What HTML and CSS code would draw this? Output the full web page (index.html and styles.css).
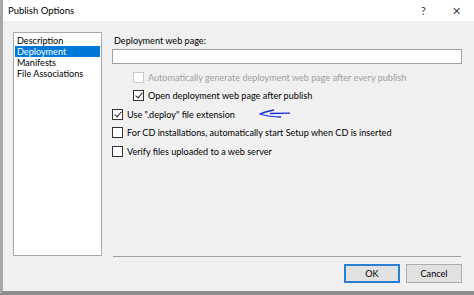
FILE: index.html
```html
<!DOCTYPE html>
<html>
<head>
<meta charset="utf-8">
<link rel="stylesheet" href="styles.css">
</head>
<body>
<div class="window">
  <div class="titlebar">
    <span class="title">Publish Options</span>
    <span class="help">?</span>
    <span class="close">✕</span>
  </div>
  <div class="body">
    <ul class="list">
      <li>Description</li>
      <li class="selected">Deployment</li>
      <li>Manifests</li>
      <li>File Associations</li>
    </ul>
    <div class="panel">
      <div class="label">Deployment web page:</div>
      <div class="input"></div>
      <div class="check sub disabled first"><span class="box"></span>Automatically generate deployment web page after every publish</div>
      <div class="check sub"><span class="box checked"></span>Open deployment web page after publish</div>
      <div class="check"><span class="box checked"></span>Use ".deploy" file extension
        <svg class="arrow" width="32" height="10" viewBox="0 0 32 10"><path d="M15 1 C10 2 5 3 1 5 C7 7 14 8 22 8" fill="none" stroke="#1a2fd8" stroke-width="1.3"/><path d="M11 4.5 L31 4.2" fill="none" stroke="#1a2fd8" stroke-width="1.3"/></svg>
      </div>
      <div class="check"><span class="box"></span>For CD installations, automatically start Setup when CD is inserted</div>
      <div class="check"><span class="box"></span>Verify files uploaded to a web server</div>
      <div class="spacer"></div>
      <div class="separator"></div>
      <div class="buttons">
        <div class="btn default">OK</div>
        <div class="btn">Cancel</div>
      </div>
    </div>
  </div>
</div>
</body>
</html>
```
FILE: styles.css
```css
* { box-sizing: border-box; }
html, body { margin: 0; padding: 0; }
body {
  width: 474px;
  height: 295px;
  overflow: hidden;
  font-family: "Lato", "Noto Sans", sans-serif;
  font-size: 9.1px;
  color: #000;
  background: #f0f0f0;
}
.window {
  width: 474px;
  height: 295px;
  display: flex;
  flex-direction: column;
  border-left: 3px solid #a8a8a8;
  border-bottom: 4px solid #8c8c8c;
  background: #f0f0f0;
}
.titlebar {
  height: 21px;
  flex: none;
  background: #fff;
  display: flex;
  align-items: center;
  padding-left: 5px;
  font-size: 9.5px;
}
.title { flex: 1; }
.help { width: 31px; color: #333; font-size: 10.5px; }
.close { width: 22px; color: #444; font-size: 11px; }
.body {
  flex: 1;
  display: flex;
  padding: 11px 12px 0 10px;
}
.list {
  list-style: none;
  margin: 0;
  padding: 2px 1px;
  width: 89px;
  height: 224px;
  background: #fff;
  border: 1px solid #a8a8a8;
  flex: none;
}
.list li {
  height: 11px;
  line-height: 11px;
  padding-left: 2px;
}
.list li.selected { background: #0078d7; color: #fff; }
.panel {
  flex: 1;
  margin-left: 10px;
  display: flex;
  flex-direction: column;
}
.label { margin-top: 2px; line-height: 13px; padding-left: 2px; }
.input {
  height: 15px;
  margin-top: 2px;
  background: #fff;
  border: 1px solid #a0a0a0;
}
.check {
  display: flex;
  align-items: center;
  height: 14px;
  margin-top: 4.5px;
  white-space: nowrap;
}
.check.sub { padding-left: 21px; }
.check.first { margin-top: 6px; }
.disabled { color: #a0a0a0; }
.box {
  width: 11px;
  height: 11px;
  border: 1px solid #333;
  background: #fff;
  margin-right: 4px;
  position: relative;
  flex: none;
}
.disabled .box { border-color: #c8c8c8; }
.box.checked::after {
  content: "";
  position: absolute;
  left: 3px;
  top: 0px;
  width: 3px;
  height: 6px;
  border-right: 1px solid #222;
  border-bottom: 1px solid #222;
  transform: rotate(40deg);
}
.arrow { margin-left: 24px; }
.spacer { flex: 1; }
.separator {
  height: 1px;
  background: #a0a0a0;
  margin-left: 1px;
  margin-right: 1px;
}
.buttons {
  display: flex;
  justify-content: flex-end;
  gap: 6px;
  margin-top: 7px;
  margin-bottom: 8px;
}
.btn {
  width: 56px;
  height: 19px;
  background: #e1e1e1;
  border: 1px solid #adadad;
  display: flex;
  align-items: center;
  justify-content: center;
}
.btn.default { border: 2px solid #2a80d0; }
```
